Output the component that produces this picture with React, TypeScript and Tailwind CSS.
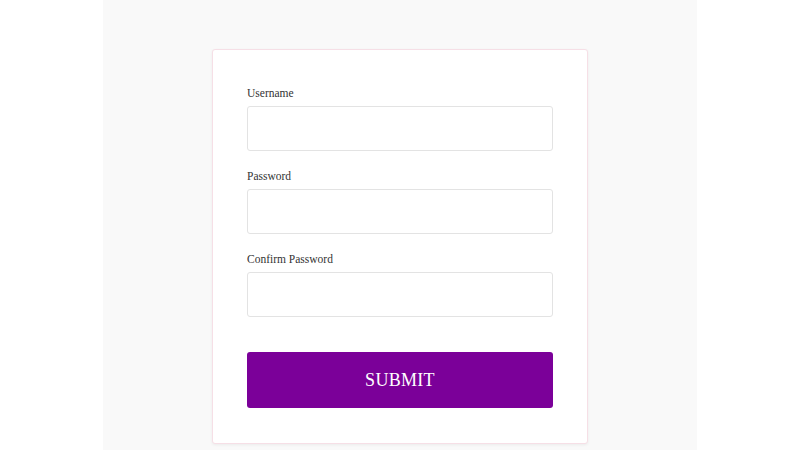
export default function App() {
  const fields = ['Username', 'Password', 'Confirm Password']

  return (
    <div
      className="flex h-[450px] w-[800px] justify-center overflow-hidden bg-white"
      style={{ fontFamily: '"Liberation Serif", "DejaVu Serif", serif' }}
    >
      <div className="flex w-[594px] justify-center bg-[#f9f9f9] pt-[49px]">
        <form className="flex h-[395px] w-[376px] flex-col rounded-[3px] border border-[#f6dfe6] bg-white px-[34px] pt-[36px] shadow-[0_1px_3px_rgba(0,0,0,0.06)]">
          {fields.map((f) => (
            <div key={f} className="mb-[18px]">
              <label className="mb-[6px] block text-[11.5px] leading-[14px] text-[#333]">{f}</label>
              <input
                type={f === 'Username' ? 'text' : 'password'}
                className="block h-[45px] w-[306px] rounded-[3px] border border-[#e3e3e3] bg-white outline-none"
              />
            </div>
          ))}
          <button
            type="button"
            className="mt-[17px] flex h-[56px] w-[306px] items-center justify-center rounded-[3px] bg-[#7b0099] text-[18px] tracking-[0.3px] text-white"
          >
            SUBMIT
          </button>
        </form>
      </div>
    </div>
  )
}
